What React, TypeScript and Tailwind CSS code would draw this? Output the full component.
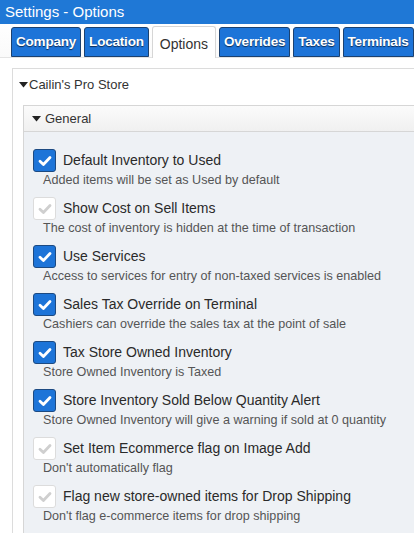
import React from "react"

const tabs = ["Company", "Location", "Options", "Overrides", "Taxes", "Terminals"]

const options = [
  { label: "Default Inventory to Used", desc: "Added items will be set as Used by default", checked: true },
  { label: "Show Cost on Sell Items", desc: "The cost of inventory is hidden at the time of transaction", checked: false },
  { label: "Use Services", desc: "Access to services for entry of non-taxed services is enabled", checked: true },
  { label: "Sales Tax Override on Terminal", desc: "Cashiers can override the sales tax at the point of sale", checked: true },
  { label: "Tax Store Owned Inventory", desc: "Store Owned Inventory is Taxed", checked: true },
  { label: "Store Inventory Sold Below Quantity Alert", desc: "Store Owned Inventory will give a warning if sold at 0 quantity", checked: true },
  { label: "Set Item Ecommerce flag on Image Add", desc: "Don't automatically flag", checked: false },
  { label: "Flag new store-owned items for Drop Shipping", desc: "Don't flag e-commerce items for drop shipping", checked: false },
]

function Caret() {
  return (
    <svg width="9" height="6" viewBox="0 0 9 6" className="shrink-0">
      <path d="M0 0 H9 L4.5 5.5 Z" fill="#222" />
    </svg>
  )
}

function Check({ checked }: { checked: boolean }) {
  return (
    <div
      className={
        checked
          ? "h-[23px] w-[23px] shrink-0 rounded-[3px] border border-[#1c4a82] bg-[#1d74d8] flex items-center justify-center"
          : "h-[23px] w-[23px] shrink-0 rounded-[3px] border border-[#dcdcdc] bg-white flex items-center justify-center"
      }
    >
      <svg width="14" height="12" viewBox="0 0 14 12">
        <path
          d="M2 6.2 L5.4 9.4 L12 2.6"
          fill="none"
          stroke={checked ? "#ffffff" : "#cfcfcf"}
          strokeWidth="2.8"
          strokeLinecap="round"
          strokeLinejoin="round"
        />
      </svg>
    </div>
  )
}

export default function App() {
  return (
    <div className="w-[414px] h-[533px] overflow-hidden bg-white font-['Liberation_Sans',Arial,sans-serif]">
      <div className="h-[24px] bg-[#1f78d6] text-white text-[15px] pl-[5px] leading-[24px]">Settings - Options</div>

      <div className="flex items-end gap-[3px] pl-[11px] h-[34px] border-b border-[#e4e4e4] bg-gradient-to-b from-white to-[#fafafa]">
        {tabs.map(t =>
          t === "Options" ? (
            <div
              key={t}
              className="h-[32px] px-[7px] border border-b-0 border-[#d6d6d6] rounded-t-[3px] bg-white text-[#333] text-[14px] flex items-center pt-[4px] mb-[-1px]"
            >
              {t}
            </div>
          ) : (
            <div
              key={t}
              className="h-[30px] px-[4px] border border-[#1b4170] rounded-t-[3px] bg-[#1d74d8] text-white font-bold text-[13.5px] tracking-[-0.2px] flex items-center [text-shadow:0_1px_1px_#0d2a50]"
            >
              {t}
            </div>
          )
        )}
      </div>

      <div className="ml-[12px] mt-[10px] border border-[#dcdcdc] border-r-0">
        <div className="h-[31px] flex items-center gap-[1px] pl-[6px] text-[13px] text-[#333]">
          <Caret />
          Cailin's Pro Store
        </div>
        <div className="ml-[10px] mt-[5px] border border-[#d6d6d6] border-r-0">
          <div className="h-[26px] flex items-center gap-[4px] pl-[8px] text-[13px] text-[#333] bg-gradient-to-b from-[#fbfbfb] to-[#f0f0f0] border-b border-[#d6d6d6] shadow-[0_1px_1px_rgba(0,0,0,0.05)]">
            <Caret />
            General
          </div>
          <div className="bg-[#eef1f5] pt-[17px] pl-[9px] pb-[20px]">
            {options.map(o => (
              <div key={o.label} className="h-[48px]">
                <div className="flex items-center gap-[7px]">
                  <Check checked={o.checked} />
                  <span className="text-[14px] text-[#2a2a2a] whitespace-nowrap">{o.label}</span>
                </div>
                <div className="pl-[10px] text-[12.6px] text-[#555] leading-[16px] whitespace-nowrap">{o.desc}</div>
              </div>
            ))}
          </div>
        </div>
      </div>
    </div>
  )
}
